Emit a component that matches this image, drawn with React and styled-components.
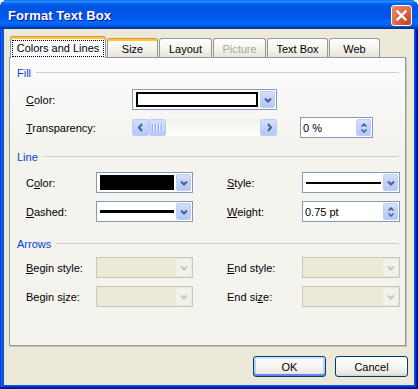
import React from 'react'
import styled, { createGlobalStyle, css } from 'styled-components'

const GlobalStyle = createGlobalStyle`
  html, body {
    margin: 0;
    padding: 0;
    background: #ffffff;
  }
  body {
    font-family: "Liberation Sans", Arial, sans-serif;
    font-size: 11px;
    color: #000;
  }
  * {
    box-sizing: border-box;
  }
`

const Window = styled.div`
  width: 418px;
  height: 389px;
  display: flex;
  flex-direction: column;
  background: #0855dd;
  border-radius: 8px 8px 0 0;
  overflow: hidden;
  box-shadow: inset -1px -1px #00138c, inset 1px 0 #0831d9, inset -2px -2px #001ea0,
    inset 2px 0 #166aee, inset -3px -3px #003bda, inset 3px 0 #0855dd;
`

const TitleBar = styled.div`
  height: 29px;
  flex: none;
  display: flex;
  align-items: center;
  justify-content: space-between;
  padding: 1px 6px 0 8px;
  background: linear-gradient(
    to bottom,
    #0058ee 0%,
    #3593ff 4%,
    #288eff 6%,
    #127dff 8%,
    #036ffc 10%,
    #0262ee 14%,
    #0057e5 20%,
    #0054e3 24%,
    #0055eb 56%,
    #005bf5 66%,
    #026afe 76%,
    #0062ef 86%,
    #0052d6 92%,
    #0040ab 94%,
    #003092 100%
  );
`

const Title = styled.span`
  color: #fff;
  font-weight: bold;
  font-size: 13px;
  letter-spacing: 0.1px;
  text-shadow: 1px 1px #0f1089;
`

const CloseButton = styled.div`
  width: 21px;
  height: 21px;
  border: 1px solid #fff;
  border-radius: 3px;
  background: radial-gradient(circle at 85% 85%, #cc4622 0%, #d85a38 35%, #e5795a 75%, #eb8d70 100%);
  display: flex;
  align-items: center;
  justify-content: center;
  margin-top: 1px;
`

const Client = styled.div`
  flex: 1;
  margin: 0 4px 4px 4px;
  background: #ece9d8;
  padding: 7px 6px 8px 5px;
  display: flex;
  flex-direction: column;
`

const TabStrip = styled.div`
  height: 21px;
  display: flex;
  align-items: flex-end;
  padding-left: 1px;
`

const Tab = styled.div`
  position: relative;
  width: ${p => p.$w}px;
  height: ${p => (p.$active ? 22 : 19)}px;
  margin-left: ${p => (p.$first ? 0 : 1)}px;
  margin-bottom: ${p => (p.$active ? -1 : 0)}px;
  z-index: ${p => (p.$active ? 1 : 0)};
  border: 1px solid #919b9c;
  border-bottom: none;
  border-radius: 3px 3px 0 0;
  background: ${p => (p.$active ? '#fcfcfe' : 'linear-gradient(#ffffff, #f3f2ec 60%, #e6e4da)')};
  color: ${p => (p.$disabled ? '#aca899' : '#000')};
  display: flex;
  align-items: center;
  justify-content: center;
  padding-top: ${p => (p.$active ? 1 : 2)}px;
  ${p =>
    p.$hot &&
    css`
      border-top-color: #e68b2c;
      box-shadow: inset 0 2px 0 #ffc73c;
    `}
`

const FocusText = styled.span`
  outline: 1px dotted #000;
  outline-offset: 0;
  padding: 1px 4px 2px;
`

const Panel = styled.div`
  height: 289px;
  margin-right: 2px;
  border: 1px solid #919b9c;
  background: linear-gradient(#fcfcfe, #f4f3ee 30%);
  box-shadow: 1px 1px 0 #c8c5b6;
  padding: 8px 6px 0 7px;
`

const Section = styled.div`
  margin-top: ${p => p.$mt || 0}px;
`

const Header = styled.div`
  height: 13px;
  display: flex;
  align-items: center;
  color: #0046d5;

  &::after {
    content: '';
    flex: 1;
    height: 1px;
    margin-left: 5px;
    background: #d0d0bf;
  }
`

const Row = styled.div`
  display: flex;
  align-items: center;
  height: 21px;
  padding-left: 9px;
  margin-top: ${p => p.$mt}px;
`

const Label = styled.label`
  width: ${p => p.$w}px;
  margin-left: ${p => p.$ml || 0}px;
  flex: none;
  white-space: nowrap;
`

const Key = styled.span`
  text-decoration: underline;
`

const Combo = styled.div`
  width: ${p => p.$w}px;
  height: 21px;
  flex: none;
  border: 1px solid ${p => (p.$disabled ? '#c9c7ba' : '#7f9db9')};
  background: ${p => (p.$disabled ? '#ece9d8' : '#ffffff')};
  padding: 1px;
  display: flex;
  align-items: stretch;
`

const ComboField = styled.div`
  flex: 1;
  display: flex;
  align-items: center;
  padding: 1px 2px;
`

const Swatch = styled.div`
  flex: 1;
  align-self: stretch;
  border: 2px solid #000;
  background: ${p => p.$color};
`

const Stroke = styled.div`
  flex: 1;
  height: ${p => p.$weight}px;
  background: #000;
`

const ArrowButton = styled.div`
  width: ${p => p.$w || 15}px;
  flex: none;
  border-radius: 2px;
  display: flex;
  flex-direction: column;
  align-items: center;
  justify-content: center;
  gap: 2px;
  ${p =>
    p.$disabled
      ? css`
          background: #f2f1ea;
        `
      : css`
          border: 1px solid #bccdf6;
          background: linear-gradient(#d5e0fc, #c3d3fd 40%, #b6c8f6);
        `}
`

const Track = styled.div`
  width: 145px;
  height: 17px;
  flex: none;
  display: flex;
  background: linear-gradient(#f3f1ec, #fefefb);
`

const TrackSpace = styled.div`
  flex: 1;
`

const Thumb = styled.div`
  width: 17px;
  border: 1px solid #bccdf6;
  border-radius: 2px;
  background: linear-gradient(#d5e0fc, #c3d3fd 40%, #b6c8f6);
  display: flex;
  align-items: center;
  justify-content: center;
  gap: 1px;

  span {
    width: 1px;
    height: 7px;
    background: #8eb0f8;
    box-shadow: 1px 0 #eef3fe;
    margin-right: 1px;
  }
`

const Spinner = styled.div`
  width: ${p => p.$w}px;
  height: 21px;
  flex: none;
  margin-left: ${p => p.$ml || 0}px;
  border: 1px solid #7f9db9;
  background: #fff;
  padding: 1px 1px 1px 2px;
  display: flex;
  align-items: stretch;
`

const SpinText = styled.div`
  flex: 1;
  display: flex;
  align-items: center;
`

const ButtonRow = styled.div`
  display: flex;
  justify-content: flex-end;
  gap: 9px;
  margin-top: 10px;
`

const Button = styled.button`
  width: 73px;
  height: 21px;
  font: inherit;
  color: #000;
  border: 1px solid #003c74;
  border-radius: 3px;
  background: linear-gradient(#ffffff, #f4f4f0 55%, #e9e7df 88%, #d6d0c5);
  padding: 0;
  ${p =>
    p.$default &&
    css`
      box-shadow: inset 0 2px 0 #cee7ff, inset 0 -2px 0 #6982ee, inset 2px 0 0 #b9d1fa,
        inset -2px 0 0 #b9d1fa;
    `}
`

const Chevron = ({ dir = 'down', disabled }) => {
  const color = disabled ? '#c9c7ba' : '#4d6185'
  const pts = {
    down: '1,1.5 4,4.5 7,1.5',
    up: '1,4.5 4,1.5 7,4.5',
    left: '5,1 2,4.5 5,8',
    right: '3,1 6,4.5 3,8',
  }[dir]
  const vertical = dir === 'left' || dir === 'right'
  return (
    <svg width={vertical ? 8 : 8} height={vertical ? 9 : 6} viewBox={vertical ? '0 0 8 9' : '0 0 8 6'}>
      <polyline points={pts} fill="none" stroke={color} strokeWidth="2" />
    </svg>
  )
}

const SmallChevron = ({ dir }) => (
  <svg width="6" height="4" viewBox="0 0 6 4">
    <polyline
      points={dir === 'up' ? '0.5,3.5 3,1 5.5,3.5' : '0.5,0.5 3,3 5.5,0.5'}
      fill="none"
      stroke="#4d6185"
      strokeWidth="1.5"
    />
  </svg>
)

function DropDown({ w, disabled, children }) {
  return (
    <Combo $w={w} $disabled={disabled}>
      <ComboField>{children}</ComboField>
      <ArrowButton $disabled={disabled}>
        <Chevron dir="down" disabled={disabled} />
      </ArrowButton>
    </Combo>
  )
}

function SpinBox({ w, ml, value }) {
  return (
    <Spinner $w={w} $ml={ml}>
      <SpinText>{value}</SpinText>
      <ArrowButton>
        <SmallChevron dir="up" />
        <SmallChevron dir="down" />
      </ArrowButton>
    </Spinner>
  )
}

const tabs = [
  { label: 'Colors and Lines', w: 96, active: true },
  { label: 'Size', w: 51, hot: true },
  { label: 'Layout', w: 53 },
  { label: 'Picture', w: 53, disabled: true },
  { label: 'Text Box', w: 61 },
  { label: 'Web', w: 51 },
]

export default function App() {
  return (
    <>
      <GlobalStyle />
      <Window>
        <TitleBar>
          <Title>Format Text Box</Title>
          <CloseButton>
            <svg width="11" height="11" viewBox="0 0 11 11">
              <path d="M1.5 1.5 L9.5 9.5 M9.5 1.5 L1.5 9.5" stroke="#fff" strokeWidth="2.4" strokeLinecap="square" />
            </svg>
          </CloseButton>
        </TitleBar>
        <Client>
          <TabStrip>
            {tabs.map((t, i) => (
              <Tab key={t.label} $w={t.w} $first={i === 0} $active={t.active} $hot={t.active || t.hot} $disabled={t.disabled}>
                {t.active ? <FocusText>{t.label}</FocusText> : t.label}
              </Tab>
            ))}
          </TabStrip>
          <Panel>
            <Section>
              <Header>Fill</Header>
              <Row $mt={10}>
                <Label $w={106}>
                  <Key>C</Key>olor:
                </Label>
                <DropDown w={145}>
                  <Swatch $color="#ffffff" />
                </DropDown>
              </Row>
              <Row $mt={7}>
                <Label $w={106}>
                  <Key>T</Key>ransparency:
                </Label>
                <Track>
                  <ArrowButton $w={17}>
                    <Chevron dir="left" />
                  </ArrowButton>
                  <Thumb>
                    <span />
                    <span />
                    <span />
                    <span />
                  </Thumb>
                  <TrackSpace />
                  <ArrowButton $w={17}>
                    <Chevron dir="right" />
                  </ArrowButton>
                </Track>
                <SpinBox w={73} ml={23} value="0 %" />
              </Row>
            </Section>

            <Section $mt={12}>
              <Header>Line</Header>
              <Row $mt={9}>
                <Label $w={70}>
                  C<Key>o</Key>lor:
                </Label>
                <DropDown w={97}>
                  <Swatch $color="#000000" />
                </DropDown>
                <Label $w={75} $ml={34}>
                  <Key>S</Key>tyle:
                </Label>
                <DropDown w={98}>
                  <Stroke $weight={2} />
                </DropDown>
              </Row>
              <Row $mt={8}>
                <Label $w={70}>
                  <Key>D</Key>ashed:
                </Label>
                <DropDown w={97}>
                  <Stroke $weight={3} />
                </DropDown>
                <Label $w={75} $ml={34}>
                  <Key>W</Key>eight:
                </Label>
                <SpinBox w={98} value="0.75 pt" />
              </Row>
            </Section>

            <Section $mt={15}>
              <Header>Arrows</Header>
              <Row $mt={7}>
                <Label $w={70}>
                  <Key>B</Key>egin style:
                </Label>
                <DropDown w={97} disabled />
                <Label $w={75} $ml={34}>
                  <Key>E</Key>nd style:
                </Label>
                <DropDown w={98} disabled />
              </Row>
              <Row $mt={8}>
                <Label $w={70}>
                  Begin s<Key>i</Key>ze:
                </Label>
                <DropDown w={97} disabled />
                <Label $w={75} $ml={34}>
                  End si<Key>z</Key>e:
                </Label>
                <DropDown w={98} disabled />
              </Row>
            </Section>
          </Panel>
          <ButtonRow>
            <Button $default>OK</Button>
            <Button>Cancel</Button>
          </ButtonRow>
        </Client>
      </Window>
    </>
  )
}
